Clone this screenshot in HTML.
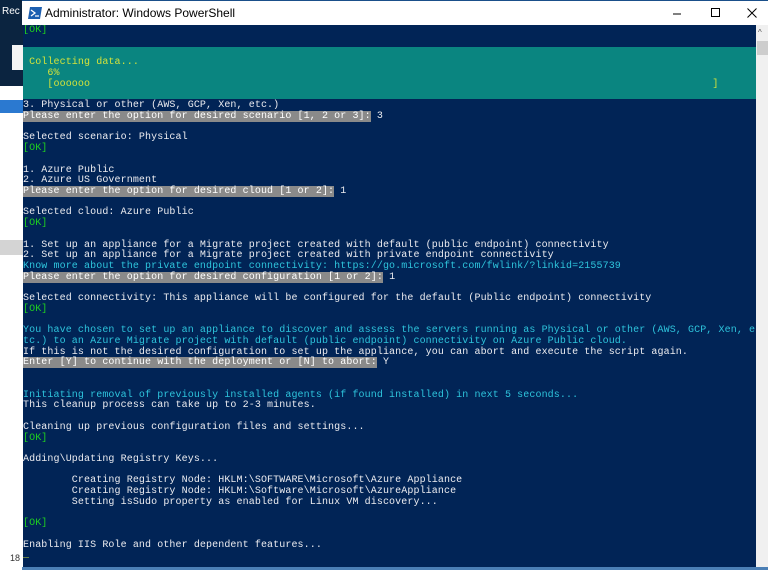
<!DOCTYPE html>
<html><head><meta charset="utf-8"><style>
*{margin:0;padding:0}
html,body{width:768px;height:570px;overflow:hidden;background:#fff;position:relative;font-family:"Liberation Sans",sans-serif}
.desk{position:absolute;left:0;top:0;width:23px;height:86px;background:#0b2440}
.desk2{position:absolute;left:12px;top:45px;width:11px;height:25px;background:#f4f4f4}
.bluebar{position:absolute;left:0;top:100px;width:23px;height:13px;background:#2b79d0}
.graybar{position:absolute;left:0;top:240px;width:23px;height:15px;background:#d4d4d4}
.title{position:absolute;left:22px;top:0;width:746px;height:25px;background:#fff;border-top:1px solid #1a4f8a;box-sizing:border-box}
.title span{position:absolute;left:23px;top:5px;font-size:12px;color:#000}
.con{position:absolute;left:23px;top:25px;width:733px;height:542px;background:#012456;overflow:hidden}
.sb{position:absolute;left:756px;top:25px;width:12px;height:542px;background:#f0f0f0}
.thumb{position:absolute;left:757px;top:41px;width:11px;height:14px;background:#cdcdcd}
.bot{position:absolute;left:22px;top:567px;width:746px;height:3px;background:#4b7fb5}
.banner{position:absolute;left:0;top:22px;width:733px;height:52px;background:#0a8580}
pre{position:absolute;left:0;top:1.2px;font-family:"Liberation Mono",monospace;font-size:10px;letter-spacing:0.1px;line-height:10.72px;color:#ececf0;white-space:pre}
.g{color:#1fd11f}.c{color:#2ec4dc}.y{color:#d4e23a}
.h{background:#8a8a8a;color:#fff}
</style></head><body>
<div class="desk"></div><div class="desk2"></div>
<div style="position:absolute;left:2px;top:6px;font-size:10px;color:#fff">Rec</div>
<div class="bluebar"></div><div class="graybar"></div>
<div style="position:absolute;left:10px;top:553px;font-size:9px;color:#333">18</div>
<div class="title">
<svg style="position:absolute;left:6px;top:6px" width="14" height="12"><path d="M2 0h12l-2 12H0z" fill="#1c5fb0"/><path d="M3 3l4 3-4 3" stroke="#fff" stroke-width="1.3" fill="none"/><path d="M7 9h4" stroke="#fff" stroke-width="1.2"/></svg>
<span>Administrator: Windows PowerShell</span>
<svg style="position:absolute;left:650px;top:8px" width="10" height="10"><path d="M1 5h8" stroke="#000"/></svg>
<svg style="position:absolute;left:689px;top:7px" width="10" height="10"><rect x="0.5" y="0.5" width="8" height="8" stroke="#000" fill="none"/></svg>
<svg style="position:absolute;left:725px;top:7px" width="10" height="10"><path d="M0.5 0.5l9 9M9.5 0.5l-9 9" stroke="#000"/></svg>
</div>
<div class="con">
<div class="banner"></div>
<pre><span class="g">[OK]</span>


<span class="y"> Collecting data...
    6%
    [oooooo                                                                                                      ]</span>

3. Physical or other (AWS, GCP, Xen, etc.)
<span class="h">Please enter the option for desired scenario [1, 2 or 3]:</span> 3

Selected scenario: Physical
<span class="g">[OK]</span>

1. Azure Public
2. Azure US Government
<span class="h">Please enter the option for desired cloud [1 or 2]:</span> 1

Selected cloud: Azure Public
<span class="g">[OK]</span>

1. Set up an appliance for a Migrate project created with default (public endpoint) connectivity
2. Set up an appliance for a Migrate project created with private endpoint connectivity
<span class="c">Know more about the private endpoint connectivity: https://go.microsoft.com/fwlink/?linkid=2155739</span>
<span class="h">Please enter the option for desired configuration [1 or 2]:</span> 1

Selected connectivity: This appliance will be configured for the default (Public endpoint) connectivity
<span class="g">[OK]</span>

<span class="c">You have chosen to set up an appliance to discover and assess the servers running as Physical or other (AWS, GCP, Xen, e
tc.) to an Azure Migrate project with default (public endpoint) connectivity on Azure Public cloud.</span>
If this is not the desired configuration to set up the appliance, you can abort and execute the script again.
<span class="h">Enter [Y] to continue with the deployment or [N] to abort:</span> Y


<span class="c">Initiating removal of previously installed agents (if found installed) in next 5 seconds...</span>
This cleanup process can take up to 2-3 minutes.

Cleaning up previous configuration files and settings...
<span class="g">[OK]</span>

Adding\Updating Registry Keys...

        Creating Registry Node: HKLM:\SOFTWARE\Microsoft\Azure Appliance
        Creating Registry Node: HKLM:\Software\Microsoft\AzureAppliance
        Setting isSudo property as enabled for Linux VM discovery...

<span class="g">[OK]</span>

Enabling IIS Role and other dependent features...
<span class="y">_</span></pre>
</div>
<div class="sb"></div><div class="thumb"></div>
<div style="position:absolute;left:758px;top:28px;font-size:8px;color:#555">^</div>
<div class="bot"></div>
</body></html>
